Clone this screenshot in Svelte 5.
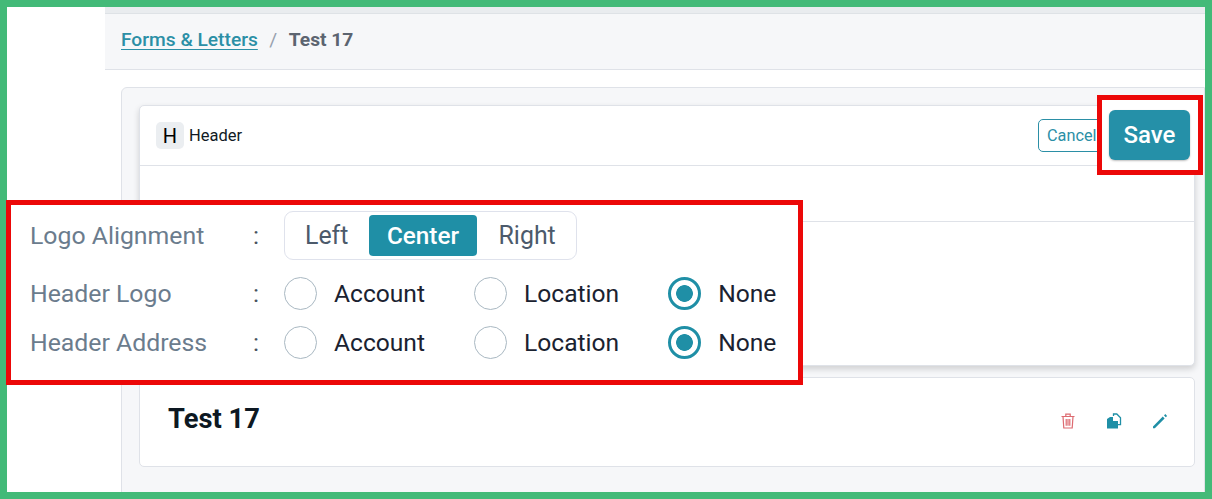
<script>
	const radioRows = [
		{ label: 'Header Logo', selected: 'None' },
		{ label: 'Header Address', selected: 'None' }
	];
	const radioOptions = ['Account', 'Location', 'None'];
	const alignments = ['Left', 'Center', 'Right'];
	let alignment = 'Center';
</script>

<div class="frame">
	<aside class="sidebar"></aside>
	<main class="main">
		<div class="top-strip"></div>
		<nav class="breadcrumb">
			<a href="#forms">Forms &amp; Letters</a>
			<span class="slash">/</span>
			<span class="current">Test 17</span>
		</nav>
		<div class="content">
			<section class="panel">
				<div class="card editor">
					<header class="card-head">
						<span class="badge">H</span>
						<span class="head-title">Header</span>
						<button type="button" class="cancel">Cancel</button>
					</header>
					<div class="card-row"></div>
				</div>
				<div class="card title-card">
					<h2>Test 17</h2>
					<div class="actions">
						<svg class="del" viewBox="0 0 16 16" width="16" height="16" fill="none" stroke="currentColor" stroke-width="1.2">
							<path d="M1.5 3.5h13M5.8 3.2V1.2h4.4v2M3 3.5l.8 11.5h8.4l.8-11.5M6.2 6v6.8M8 6v6.8M9.8 6v6.8" />
						</svg>
						<svg class="copy" viewBox="0 0 16 16" width="16" height="16">
							<path fill="currentColor" d="M1 6l3-2h3v4h5v7.500H1z" />
							<path fill="none" stroke="currentColor" stroke-width="1.300" d="M7.500 3V1h3.300l3.700 3.700v7H12" />
						</svg>
						<svg class="pen" viewBox="0 0 16 16" width="16" height="16" fill="currentColor">
							<path d="M1 13.400l9.800-9.800 1.800 1.800-9.800 9.800H1zM12 2.400l1.300-1.300 1.800 1.800-1.300 1.300z" />
						</svg>
					</div>
				</div>
			</section>
		</div>
	</main>

	<div class="callout save-callout">
		<button type="button" class="save">Save</button>
	</div>

	<div class="callout form-callout">
		<div class="form-row">
			<span class="label">Logo Alignment</span>
			<span class="colon">:</span>
			<div class="segmented">
				{#each alignments as a}
					<button type="button" class:active={a === alignment} on:click={() => (alignment = a)}>{a}</button>
				{/each}
			</div>
		</div>
		{#each radioRows as row}
			<div class="form-row radio-row">
				<span class="label">{row.label}</span>
				<span class="colon">:</span>
				<div class="radios">
					{#each radioOptions as opt}
						<span class="radio-item">
							<span class="radio" class:checked={opt === row.selected}></span>
							<span class="radio-text">{opt}</span>
						</span>
					{/each}
				</div>
			</div>
		{/each}
	</div>
</div>

<style>
	:global(body) {
		margin: 0;
		font-family: Roboto, 'Liberation Sans', sans-serif;
	}

	.frame {
		position: relative;
		box-sizing: border-box;
		width: 1212px;
		height: 499px;
		border: 7px solid #43ba78;
		display: flex;
		background: #fff;
	}

	.sidebar {
		width: 98px;
		flex: none;
	}

	.main {
		flex: 1;
		display: flex;
		flex-direction: column;
		min-width: 0;
		overflow: hidden;
	}

	.top-strip {
		height: 7px;
		background: #e9ecef;
		border-bottom: 1px solid #dee2e6;
		box-sizing: border-box;
		flex: none;
	}

	.breadcrumb {
		height: 56px;
		flex: none;
		box-sizing: border-box;
		background: #f6f7f9;
		border-bottom: 1px solid #dfe2e8;
		padding: 0 16px 4px;
		display: flex;
		align-items: center;
		font-size: 19.2px;
		font-weight: 500;
	}

	.breadcrumb a {
		color: #2b8fa6;
		text-decoration: underline;
		text-underline-offset: 3px;
	}

	.slash {
		color: #97a0ae;
		margin: 0 11.500px;
		font-weight: 400;
	}

	.current {
		color: #5c6470;
		font-weight: 700;
	}

	.content {
		flex: 1;
		padding: 17px 0 0 16px;
		min-height: 0;
	}

	.panel {
		box-sizing: border-box;
		height: 420px;
		background: #f6f7f9;
		border: 1px solid #dfe2e8;
		border-radius: 6px 0 0 0;
		padding: 17px 9px 0 17px;
	}

	.card {
		background: #fff;
		border: 1px solid #dfe2e8;
		border-radius: 5px;
	}

	.editor {
		height: 261px;
		box-sizing: border-box;
		box-shadow: 0 3px 6px rgba(0, 0, 0, 0.16);
	}

	.card-head {
		height: 59px;
		display: flex;
		align-items: center;
		padding: 0 16px;
		border-bottom: 1px solid #dfe2e8;
	}

	.badge {
		width: 28px;
		height: 27px;
		border-radius: 5px;
		background: #ebeef1;
		display: flex;
		align-items: center;
		justify-content: center;
		font-size: 20px;
		color: #000;
		margin-right: 5px;
	}

	.head-title {
		font-size: 16.500px;
		color: #111a24;
	}

	.cancel {
		margin-left: auto;
		margin-right: 50px;
		width: 90px;
		height: 33px;
		padding: 0 0 0 8px;
		text-align: left;
		background: #fff;
		border: 1px solid #2b8fa6;
		border-radius: 5px;
		color: #2b8fa6;
		font: 400 16.300px Roboto, sans-serif;
		flex: none;
	}

	.card-row {
		height: 55px;
		border-bottom: 1px solid #dfe2e8;
	}

	.title-card {
		margin-top: 11px;
		height: 90px;
		box-sizing: border-box;
		display: flex;
		justify-content: space-between;
		padding: 26px 26px 0 28px;
	}

	.title-card h2 {
		margin: 0;
		font-size: 27.300px;
		font-weight: 700;
		line-height: 30px;
		color: #0d1822;
	}

	.actions {
		display: flex;
		gap: 30px;
		padding-top: 9px;
		align-items: flex-start;
	}

	.del {
		color: #dd6a70;
	}

	.copy,
	.pen {
		color: #1f8fa6;
	}

	.callout {
		position: absolute;
		box-sizing: border-box;
		background: #fff;
		border: 5px solid #ec0808;
	}

	.save-callout {
		left: 1090px;
		top: 88px;
		width: 106px;
		height: 80px;
		padding: 10px 7px;
	}

	.save {
		display: block;
		width: 81px;
		height: 50px;
		border: none;
		border-radius: 6px;
		background: #2590a8;
		color: #fff;
		font: 500 24px Roboto, sans-serif;
		padding: 0;
		box-shadow: 0 1px 2px rgba(0, 0, 0, 0.25);
	}

	.form-callout {
		left: -1px;
		top: 193px;
		width: 797px;
		height: 185px;
		padding: 5px 0 0 19px;
	}

	.form-row {
		display: flex;
		align-items: center;
		height: 49px;
		font-size: 24.800px;
	}

	.form-row:first-child {
		height: 50px;
		margin-bottom: 9px;
	}

	.label {
		width: 223px;
		flex: none;
		color: #6b7c8d;
	}

	.colon {
		width: 31px;
		flex: none;
		color: #48525e;
	}

	.segmented {
		box-sizing: border-box;
		height: 49px;
		display: flex;
		align-items: center;
		padding: 0 3px;
		border: 1px solid #dfe2ec;
		border-radius: 9px;
	}

	.segmented button {
		height: 41px;
		border: none;
		background: transparent;
		border-radius: 4px;
		color: #4c5a6b;
		font: 400 24.900px Roboto, sans-serif;
		padding: 0 17px;
	}

	.segmented button.active {
		background: #1f8fa6;
		color: #fff;
		font-weight: 500;
		font-size: 24.300px;
		margin: 0 5px 0 4px;
		padding: 0 17.500px;
	}

	.radios {
		display: flex;
	}

	.radio-item {
		display: flex;
		align-items: center;
		gap: 17px;
		color: #1a2230;
		margin-right: 49px;
		font-size: 24.600px;
	}

	.radio {
		box-sizing: border-box;
		width: 33px;
		height: 33px;
		border-radius: 50%;
		border: 1.500px solid #a9b8c2;
		flex: none;
	}

	.radio.checked {
		border: 3px solid #1f8fa6;
		background: radial-gradient(circle, #1f8fa6 0 8px, #fff 8.700px);
	}
</style>
